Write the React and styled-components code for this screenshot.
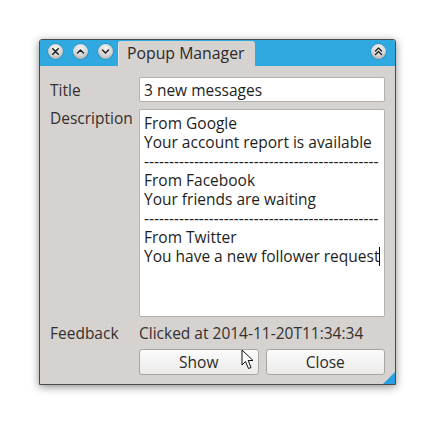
import React from "react";
import styled, { createGlobalStyle } from "styled-components";

const Global = createGlobalStyle`
  html, body { margin: 0; padding: 0; background: #ffffff; }
  body { font-family: "Open Sans", "Noto Sans", sans-serif; }
`;

const Page = styled.div`
  width: 435px;
  height: 425px;
  padding: 39px 0 0 39px;
  box-sizing: border-box;
`;

const Window = styled.div`
  position: relative;
  width: 357px;
  height: 346px;
  box-sizing: border-box;
  border: 1px solid #4a4a4a;
  border-radius: 3px 3px 0 0;
  background: #d6d2cf;
  box-shadow: 0 2px 9px rgba(0, 0, 0, 0.45);
  display: flex;
  flex-direction: column;
`;

const TitleBar = styled.div`
  height: 26px;
  background: #30a9e1;
  display: flex;
  align-items: flex-end;
  padding-left: 8px;
  padding-right: 9px;
  border-radius: 2px 2px 0 0;
`;

const WinButtons = styled.div`
  display: flex;
  gap: 10px;
  align-self: center;
  margin-top: -4px;
`;

const Tab = styled.div`
  margin-left: 5px;
  width: 137px;
  height: 25px;
  box-sizing: border-box;
  background: #d6d2cf;
  border-radius: 3px 3px 0 0;
  border-left: 1px solid #e6e4e2;
  font-size: 15.8px;
  color: #2b2b2b;
  padding-left: 8px;
  line-height: 24px;
  white-space: nowrap;
`;

const Spacer = styled.div`
  flex: 1;
`;

const RoundButton = styled.div`
  width: 15px;
  height: 15px;
  border-radius: 50%;
  background: radial-gradient(circle at 50% 30%, #f4f4f4 0%, #d4d4d4 55%, #9a9a9a 100%);
  box-shadow: 0 0 0 0.5px rgba(0, 0, 0, 0.25);
  display: flex;
  align-items: center;
  justify-content: center;
`;

const RightButton = styled(RoundButton)`
  align-self: center;
  margin-top: -4px;
`;

const Content = styled.div`
  flex: 1;
  display: grid;
  grid-template-columns: 89px 1fr;
  grid-template-rows: 25px 208px 18px 26px;
  row-gap: 7px;
  padding: 11px 10px 0 10px;
  color: #33302e;
  font-size: 15.5px;
`;

const Label = styled.div`
  display: flex;
  align-items: ${(p) => (p.$top ? "flex-start" : "center")};
  line-height: 18px;
  white-space: nowrap;
`;

const Field = styled.div`
  background: #ffffff;
  border: 1px solid #b4b0ad;
  border-radius: 2px;
  box-sizing: border-box;
  display: flex;
  align-items: center;
  padding-left: 4px;
  color: #1e1e1e;
`;

const TextArea = styled.div`
  background: #ffffff;
  border: 1px solid #b4b0ad;
  border-radius: 2px;
  box-sizing: border-box;
  padding: 4px 4px 0 4px;
  color: #1e1e1e;
  line-height: 19px;
  overflow: hidden;
  white-space: nowrap;
`;

const Line = styled.div`
  height: 19px;
`;

const Caret = styled.span`
  display: inline-block;
  width: 1px;
  height: 19px;
  background: #000;
  vertical-align: top;
`;

const Feedback = styled.div`
  display: flex;
  align-items: center;
  line-height: 18px;
  white-space: nowrap;
`;

const ButtonRow = styled.div`
  display: grid;
  grid-template-columns: 1fr 1fr;
  column-gap: 7px;
`;

const Button = styled.div`
  border: 1px solid #a9a5a2;
  border-radius: 3px;
  background: linear-gradient(#fbfbfb, #ebeae9);
  display: flex;
  align-items: center;
  justify-content: center;
  color: #2b2b2b;
`;

const Pointer = styled.svg`
  position: absolute;
  left: 201px;
  top: 309px;
`;

const Grip = styled.svg`
  position: absolute;
  right: 0;
  bottom: 0;
`;

const Close = () => (
  <svg width="9" height="9" viewBox="0 0 9 9">
    <path d="M1.8 1.8 L7.2 7.2 M7.2 1.8 L1.8 7.2" stroke="#222" strokeWidth="1.6" strokeLinecap="round" />
  </svg>
);
const Up = () => (
  <svg width="9" height="9" viewBox="0 0 9 9">
    <path d="M1.5 6 L4.5 3 L7.5 6" stroke="#222" strokeWidth="1.5" fill="none" strokeLinecap="round" strokeLinejoin="round" />
  </svg>
);
const Down = () => (
  <svg width="9" height="9" viewBox="0 0 9 9">
    <path d="M1.5 3 L4.5 6 L7.5 3" stroke="#222" strokeWidth="1.5" fill="none" strokeLinecap="round" strokeLinejoin="round" />
  </svg>
);
const DoubleUp = () => (
  <svg width="9" height="10" viewBox="0 0 9 10">
    <path d="M1.5 5 L4.5 2 L7.5 5 M1.5 8.5 L4.5 5.5 L7.5 8.5" stroke="#222" strokeWidth="1.4" fill="none" strokeLinecap="round" strokeLinejoin="round" />
  </svg>
);

const DASHES = "-".repeat(47);

export default function App() {
  return (
    <>
      <Global />
      <Page>
        <Window>
          <TitleBar>
            <WinButtons>
              <RoundButton><Close /></RoundButton>
              <RoundButton><Up /></RoundButton>
              <RoundButton><Down /></RoundButton>
            </WinButtons>
            <Tab>Popup Manager</Tab>
            <Spacer />
            <RightButton><DoubleUp /></RightButton>
          </TitleBar>
          <Content>
            <Label>Title</Label>
            <Field>3 new messages</Field>
            <Label $top>Description</Label>
            <TextArea>
              <Line>From Google</Line>
              <Line>Your account report is available</Line>
              <Line>{DASHES}</Line>
              <Line>From Facebook</Line>
              <Line>Your friends are waiting</Line>
              <Line>{DASHES}</Line>
              <Line>From Twitter</Line>
              <Line>You have a new follower request<Caret /></Line>
            </TextArea>
            <Label>Feedback</Label>
            <Feedback>Clicked at 2014-11-20T11:34:34</Feedback>
            <div />
            <ButtonRow>
              <Button>Show</Button>
              <Button>Close</Button>
            </ButtonRow>
          </Content>
          <Pointer width="14" height="22" viewBox="0 0 14 22">
            <path d="M1 1 L1 16 L4.5 12.5 L7.5 19.5 L10 18.5 L7.2 11.5 L12 11.5 Z" fill="#fff" stroke="#111" strokeWidth="1" strokeLinejoin="round" />
          </Pointer>
          <Grip width="12" height="12" viewBox="0 0 12 12">
            <path d="M12 0 L12 12 L0 12 Z" fill="#2a9ee0" />
          </Grip>
        </Window>
      </Page>
    </>
  );
}
